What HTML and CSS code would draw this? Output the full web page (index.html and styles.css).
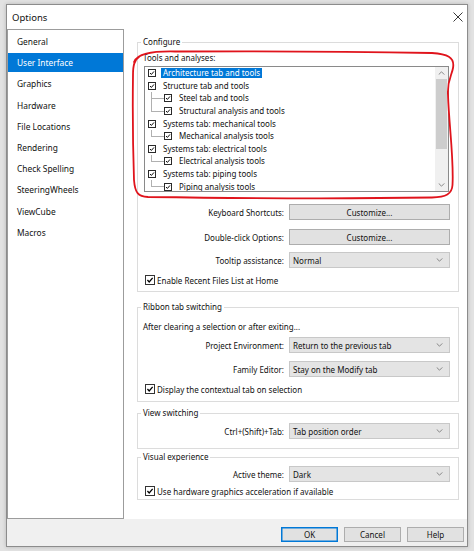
FILE: index.html
```html
<!DOCTYPE html>
<html>
<head>
  <title>Options</title>
  <link rel="stylesheet" href="styles.css">
</head>
<body>
  <svg class="defs" width="0" height="0">
    <symbol id="tick" viewBox="0 0 10 10">
      <polyline points="1.8,5 4,7.4 8.3,2.4" fill="none" stroke="#000" stroke-width="1.6"/>
    </symbol>
    <symbol id="chev" viewBox="0 0 8 5">
      <polyline points="0.5,0.5 4,4 7.5,0.5" fill="none" stroke="#707070" stroke-width="1"/>
    </symbol>
  </svg>

  <div class="dialog">
    <div class="titlebar">
      <span class="title">Options</span>
      <svg class="close" viewBox="0 0 10 10">
        <path d="M0.5 0.5 L9.5 9.5 M9.5 0.5 L0.5 9.5" stroke="#222" stroke-width="0.9" fill="none"/>
      </svg>
    </div>

    <div class="main">
      <ul class="nav">
        <li>General</li>
        <li class="active">User Interface</li>
        <li>Graphics</li>
        <li>Hardware</li>
        <li>File Locations</li>
        <li>Rendering</li>
        <li>Check Spelling</li>
        <li>SteeringWheels</li>
        <li>ViewCube</li>
        <li>Macros</li>
      </ul>

      <div class="content">
        <fieldset class="group group-configure">
          <legend>Configure</legend>
          <div class="caption">Tools and analyses:</div>
          <div class="tree">
            <div class="tree-rows">
              <div class="node"><span class="cb"><svg><use href="#tick"/></svg></span><span class="node-text selected">Architecture tab and tools</span></div>
              <div class="node"><span class="cb"><svg><use href="#tick"/></svg></span><span class="node-text">Structure tab and tools</span></div>
              <div class="node"><span class="branch mid"></span><span class="cb"><svg><use href="#tick"/></svg></span><span class="node-text">Steel tab and tools</span></div>
              <div class="node"><span class="branch"></span><span class="cb"><svg><use href="#tick"/></svg></span><span class="node-text">Structural analysis and tools</span></div>
              <div class="node"><span class="cb"><svg><use href="#tick"/></svg></span><span class="node-text">Systems tab: mechanical tools</span></div>
              <div class="node"><span class="branch"></span><span class="cb"><svg><use href="#tick"/></svg></span><span class="node-text">Mechanical analysis tools</span></div>
              <div class="node"><span class="cb"><svg><use href="#tick"/></svg></span><span class="node-text">Systems tab: electrical tools</span></div>
              <div class="node"><span class="branch"></span><span class="cb"><svg><use href="#tick"/></svg></span><span class="node-text">Electrical analysis tools</span></div>
              <div class="node"><span class="cb"><svg><use href="#tick"/></svg></span><span class="node-text">Systems tab: piping tools</span></div>
              <div class="node"><span class="branch"></span><span class="cb"><svg><use href="#tick"/></svg></span><span class="node-text">Piping analysis tools</span></div>
            </div>
            <div class="scrollbar">
              <div class="sb-arrow"><svg class="chev up"><use href="#chev"/></svg></div>
              <div class="sb-track"><div class="sb-thumb"></div></div>
              <div class="sb-arrow"><svg class="chev"><use href="#chev"/></svg></div>
            </div>
          </div>

          <div class="field row-keys">
            <label>Keyboard Shortcuts:</label>
            <button class="btn">Customize...</button>
          </div>
          <div class="field row-dblclick">
            <label>Double-click Options:</label>
            <button class="btn">Customize...</button>
          </div>
          <div class="field row-tooltip">
            <label>Tooltip assistance:</label>
            <div class="select"><span>Normal</span><svg class="chev"><use href="#chev"/></svg></div>
          </div>
          <div class="check row-recent">
            <span class="box"><svg><use href="#tick"/></svg></span>
            <span>Enable Recent Files List at Home</span>
          </div>
        </fieldset>

        <fieldset class="group group-ribbon">
          <legend>Ribbon tab switching</legend>
          <div class="caption caption-ribbon">After clearing a selection or after exiting...</div>
          <div class="field row-project">
            <label>Project Environment:</label>
            <div class="select"><span>Return to the previous tab</span><svg class="chev"><use href="#chev"/></svg></div>
          </div>
          <div class="field row-family">
            <label>Family Editor:</label>
            <div class="select"><span>Stay on the Modify tab</span><svg class="chev"><use href="#chev"/></svg></div>
          </div>
          <div class="check row-contextual">
            <span class="box"><svg><use href="#tick"/></svg></span>
            <span>Display the contextual tab on selection</span>
          </div>
        </fieldset>

        <fieldset class="group group-view">
          <legend>View switching</legend>
          <div class="field row-ctrltab">
            <label>Ctrl+(Shift)+Tab:</label>
            <div class="select"><span>Tab position order</span><svg class="chev"><use href="#chev"/></svg></div>
          </div>
        </fieldset>

        <fieldset class="group group-visual">
          <legend>Visual experience</legend>
          <div class="field row-theme">
            <label>Active theme:</label>
            <div class="select"><span>Dark</span><svg class="chev"><use href="#chev"/></svg></div>
          </div>
          <div class="check row-hardware">
            <span class="box"><svg><use href="#tick"/></svg></span>
            <span>Use hardware graphics acceleration if available</span>
          </div>
        </fieldset>
      </div>
    </div>

    <div class="footer">
      <button class="btn btn-footer btn-default">OK</button>
      <button class="btn btn-footer">Cancel</button>
      <button class="btn btn-footer">Help</button>
    </div>
  </div>

  <!-- red hand-drawn markup around the tools list -->
  <svg class="markup" width="474" height="551" viewBox="0 0 474 551">
    <path d="M134 62 C137 54, 150 51, 175 51.5 C260 51, 380 52, 432 53 C447 54, 455 57, 453 68 C452 75, 447 80, 448 95 C449 125, 454 160, 452.5 185 C452 194, 446 197, 432 197.5 C340 199, 220 198, 148 197 C138 196.5, 135 193, 134 180 C133 150, 132.5 110, 133 75 C133 66, 134 60, 140 56" fill="none" stroke="#e0141c" stroke-width="1.8" stroke-linecap="round"/>
  </svg>
</body>
</html>
```

FILE: styles.css
```css
body {
  margin: 0;
  width: 474px;
  height: 551px;
  overflow: hidden;
  position: relative;
  background-color: #e2e2e2;
  font-family: "Noto Sans", "Open Sans", sans-serif;
  font-size: 8px;
  color: #111;
}

.defs {
  position: absolute;
}

.dialog {
  box-sizing: border-box;
  width: 462px;
  height: 543px;
  margin: 4px 0 0 6px;
  background-color: #fff;
  border: 1px solid #8c8c8c;
  box-shadow: 0 0 4px rgba(0, 0, 0, 0.2);
  display: flex;
  flex-direction: column;
}

.titlebar {
  height: 24px;
  flex: none;
  display: flex;
  align-items: center;
  justify-content: space-between;
  padding: 0 4px 0 5px;
}

.title {
  font-size: 9.5px;
}

.close {
  width: 10px;
  height: 10px;
}

.main {
  flex: 1;
  display: flex;
  min-height: 0;
}

/* left category list */
.nav {
  box-sizing: border-box;
  width: 117px;
  flex: none;
  margin: 0;
  padding: 2px 0 0;
  list-style: none;
  border: 1px solid #9c9c9c;
  font-size: 8.4px;
}

.nav li {
  height: 19px;
  line-height: 19px;
  margin-bottom: 2.2px;
  padding-left: 9px;
}

.nav li.active {
  background-color: #0078d7;
  color: #fff;
}

.content {
  flex: 1;
  padding: 0 8px 0 13px;
  display: flex;
  flex-direction: column;
}

/* group boxes */
.group {
  margin: 0;
  padding: 0 0 5px;
  border: 1px solid #dcdcdc;
  min-width: 0;
}

.group legend {
  margin-left: 3px;
  padding: 0 2px;
  line-height: 12px;
}

.group-configure {
  margin-top: 7px;
}

.group-ribbon {
  margin-top: 9px;
  padding-bottom: 6px;
}

.group-view {
  margin-top: 5px;
  padding-bottom: 9px;
}

.group-visual {
  margin-top: 2px;
  padding-bottom: 2px;
}

.caption {
  margin: 4px 0 0 5px;
  line-height: 12px;
}

.caption-ribbon {
  margin-top: 8px;
}

/* tools tree */
.tree {
  box-sizing: border-box;
  height: 126px;
  margin: 2px 9px 0 6px;
  border: 1px solid #8a8a8a;
  display: flex;
}

.tree-rows {
  flex: 1;
  overflow: hidden;
}

.node {
  display: flex;
  align-items: center;
  height: 12.6px;
  padding-left: 3px;
  white-space: nowrap;
}

.cb {
  box-sizing: border-box;
  width: 8px;
  height: 8px;
  flex: none;
  border: 1px solid #2a2a2a;
  background-color: #fff;
  display: flex;
}

.cb svg {
  width: 100%;
  height: 100%;
}

.node-text {
  margin-left: 5px;
  padding: 0 2px;
  line-height: 10px;
}

.node-text.selected {
  background-color: #0078d7;
  color: #fff;
}

.branch {
  width: 16px;
  height: 100%;
  flex: none;
  background:
    linear-gradient(#b0b0b0, #b0b0b0) 3px 0 / 1px 50% no-repeat,
    linear-gradient(#b0b0b0, #b0b0b0) 3px 50% / 13px 1px no-repeat;
}

.branch.mid {
  background:
    linear-gradient(#b0b0b0, #b0b0b0) 3px 0 / 1px 100% no-repeat,
    linear-gradient(#b0b0b0, #b0b0b0) 3px 50% / 13px 1px no-repeat;
}

.scrollbar {
  width: 13px;
  flex: none;
  background-color: #f0f0f0;
  display: flex;
  flex-direction: column;
}

.sb-arrow {
  height: 12px;
  display: flex;
  align-items: center;
  justify-content: center;
}

.sb-track {
  flex: 1;
}

.sb-thumb {
  height: 70px;
  margin: 0 1px;
  background-color: #cdcdcd;
}

.chev {
  width: 7px;
  height: 4px;
}

.chev.up {
  transform: rotate(180deg);
}

/* label + control rows */
.field {
  display: grid;
  grid-template-columns: 1fr 161px;
  column-gap: 5px;
  align-items: center;
  margin-right: 8px;
}

.field label {
  text-align: right;
}

.btn {
  height: 16px;
  padding: 0;
  border: 1px solid #adadad;
  background-color: #e1e1e1;
  font-family: inherit;
  font-size: 8px;
  color: inherit;
}

.select {
  box-sizing: border-box;
  height: 16px;
  padding: 0 6px 0 3px;
  border: 1px solid #c8c8c8;
  background-color: #e4e4e4;
  display: flex;
  align-items: center;
  justify-content: space-between;
}

.row-keys { margin-top: 12px; }
.row-dblclick { margin-top: 9px; }
.row-tooltip { margin-top: 7px; }
.row-project { margin-top: 4px; }
.row-family { margin-top: 8px; }
.row-ctrltab { margin-top: 4px; }
.row-theme { margin-top: 3px; }

.check {
  display: flex;
  align-items: center;
  gap: 2px;
  height: 12px;
  margin-left: 7px;
}

.check .box {
  box-sizing: border-box;
  width: 10px;
  height: 10px;
  border: 1px solid #333;
  display: flex;
}

.check .box svg {
  width: 100%;
  height: 100%;
}

.row-recent { margin-top: 6px; }
.row-contextual { margin-top: 6px; }
.row-hardware { margin-top: 3px; }

/* bottom button strip */
.footer {
  height: 27px;
  flex: none;
  box-sizing: border-box;
  padding: 8px 3px 0 0;
  background-color: #f0f0f0;
  display: flex;
  justify-content: flex-end;
  align-items: flex-start;
  gap: 6px;
}

.btn-footer {
  width: 57px;
  height: 15px;
}

.btn-default {
  border-color: #0078d7;
  box-shadow: inset 0 0 0 0.5px #0078d7;
}

.markup {
  position: absolute;
  left: 0;
  top: 0;
  pointer-events: none;
}
```
